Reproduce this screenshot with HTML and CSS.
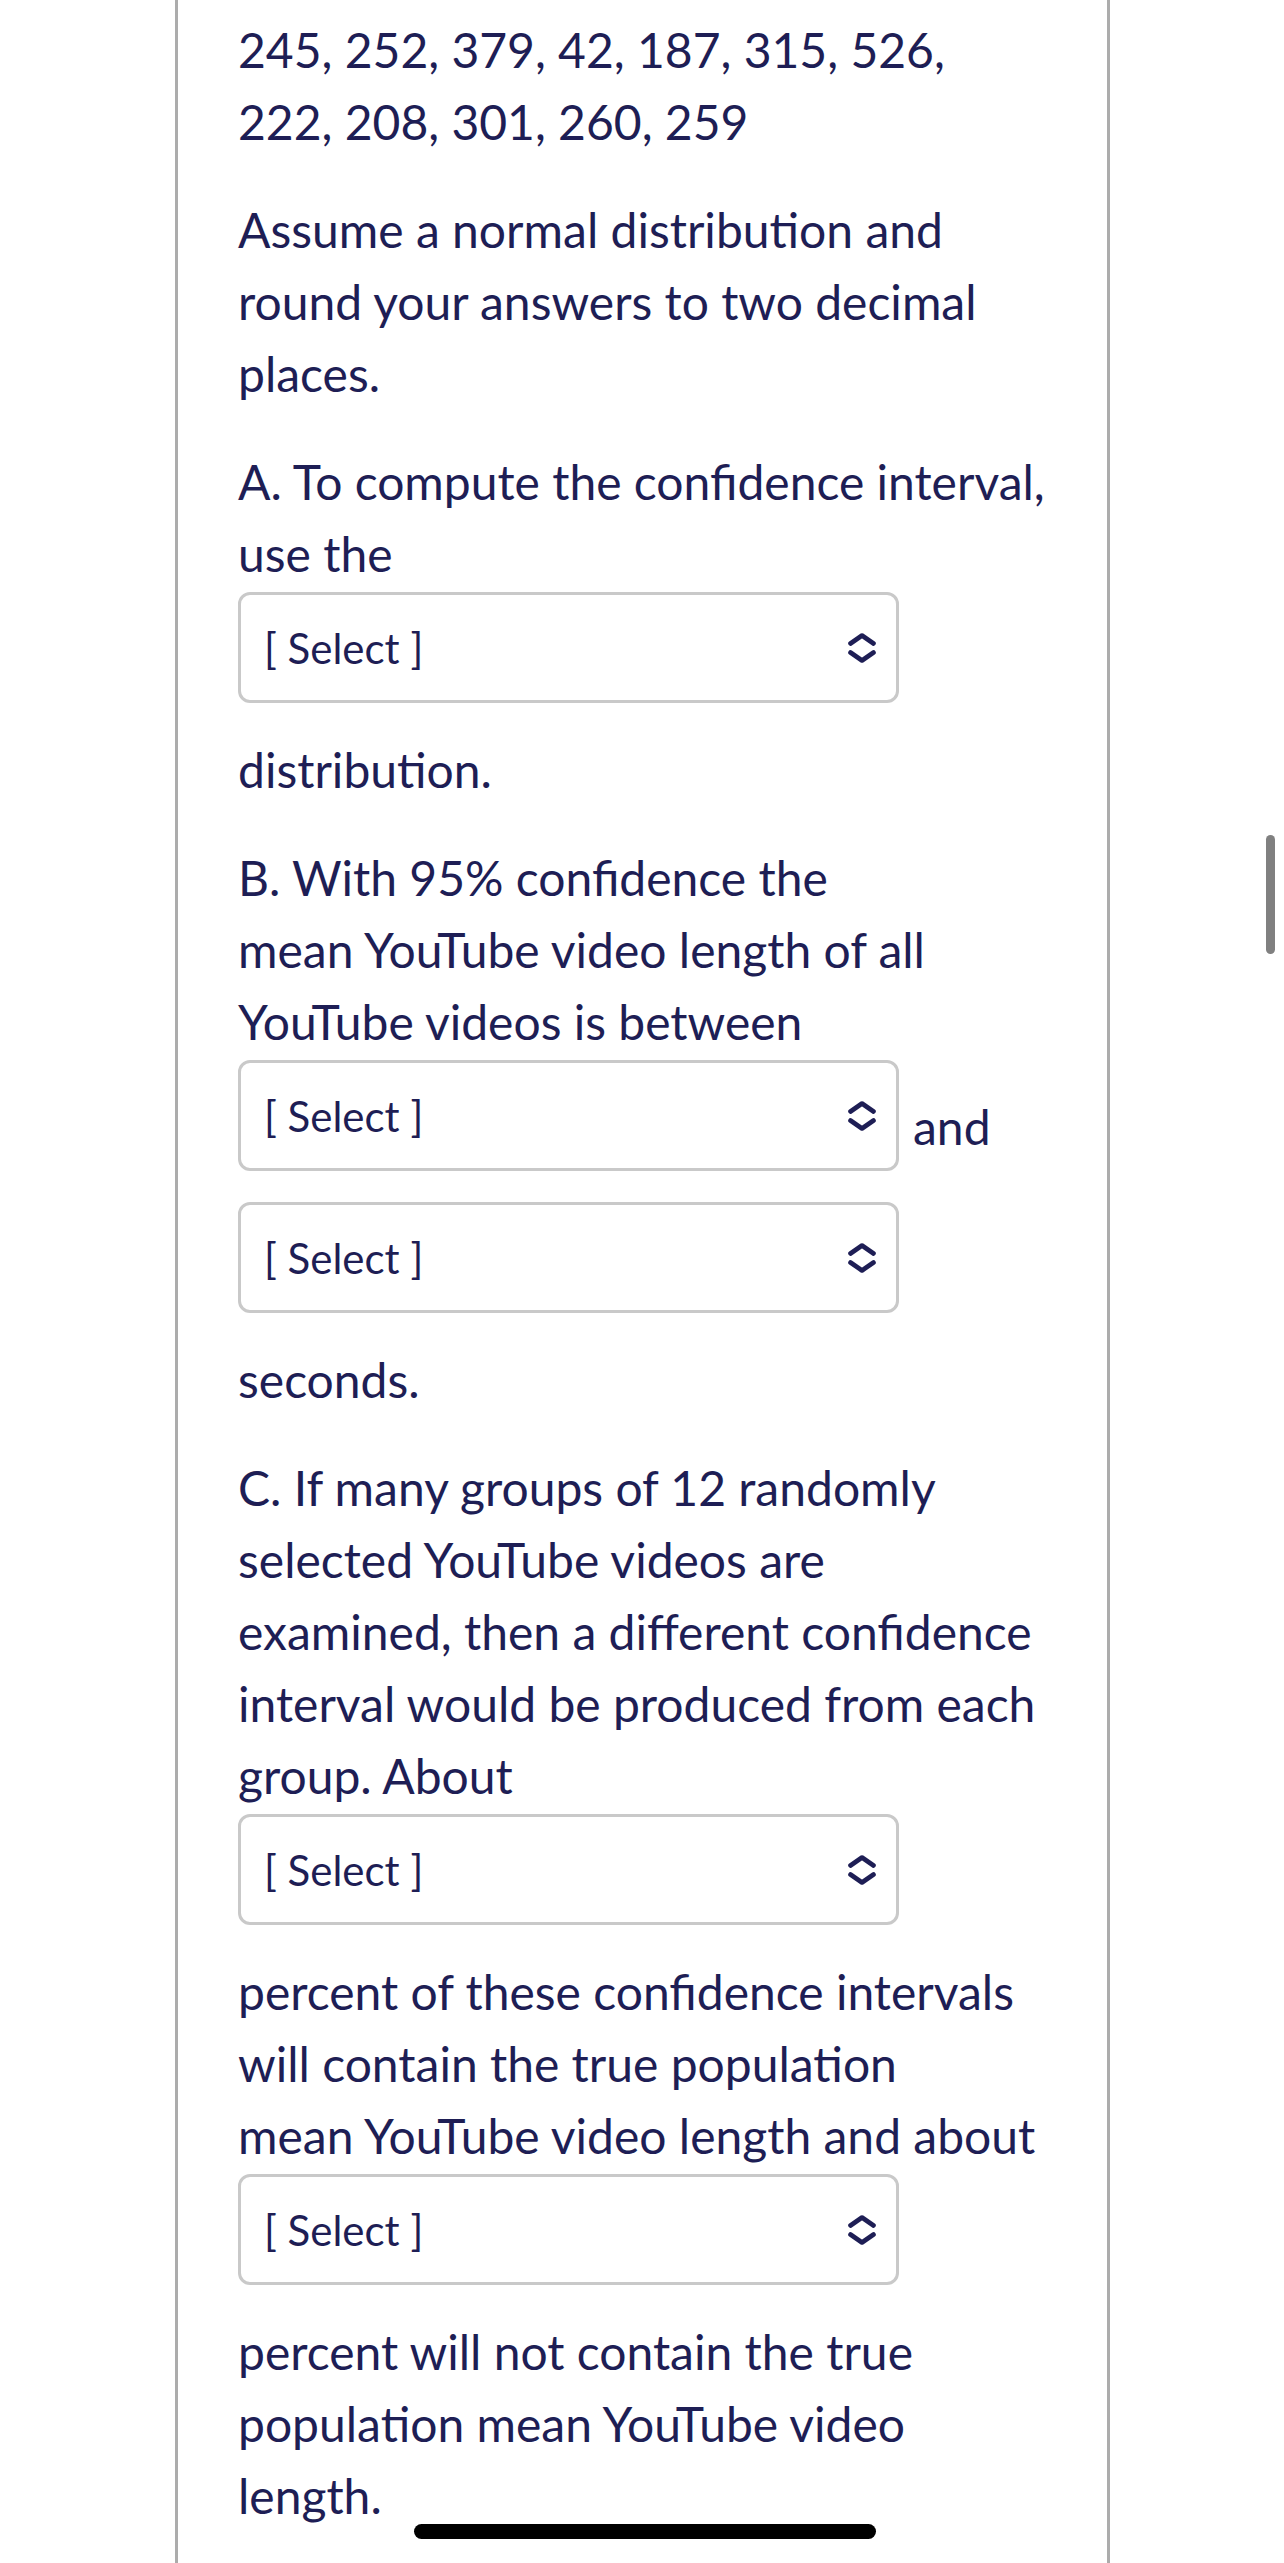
FILE: index.html
```html
<!DOCTYPE html>
<html lang="en">
<head>
<meta charset="utf-8">
<title>Quiz question</title>
<link rel="stylesheet" href="styles.css">
</head>
<body>
<div class="page">
  <div class="question">
    <div class="blk">
      <p class="txt">245, 252, 379, 42, 187, 315, 526,<br>222, 208, 301, 260, 259</p>
    </div>
    <div class="blk">
      <p class="txt">Assume a normal distribution and<br>round your answers to two decimal<br>places.</p>
    </div>
    <div class="blk">
      <p class="txt">A. To compute the confidence interval,<br>use the</p>
      <div class="dd-row">
        <div class="dd"><span class="dd-text">[ Select ]</span>
          <svg class="dd-icon" viewBox="0 0 28 30" width="28" height="30"><path d="M2.5 10.5 L14 2.5 L25.5 10.5 M2.5 19.5 L14 27.5 L25.5 19.5" fill="none" stroke="#1e1e55" stroke-width="4.6" stroke-linecap="round" stroke-linejoin="round"/></svg>
        </div>
      </div>
      <p class="txt">distribution.</p>
    </div>
    <div class="blk">
      <p class="txt">B. With 95% confidence the<br>mean YouTube video length of all<br>YouTube videos is between</p>
      <div class="dd-row">
        <div class="dd"><span class="dd-text">[ Select ]</span>
          <svg class="dd-icon" viewBox="0 0 28 30" width="28" height="30"><path d="M2.5 10.5 L14 2.5 L25.5 10.5 M2.5 19.5 L14 27.5 L25.5 19.5" fill="none" stroke="#1e1e55" stroke-width="4.6" stroke-linecap="round" stroke-linejoin="round"/></svg>
        </div>
        <span class="after">and</span>
      </div>
      <div class="dd-row">
        <div class="dd"><span class="dd-text">[ Select ]</span>
          <svg class="dd-icon" viewBox="0 0 28 30" width="28" height="30"><path d="M2.5 10.5 L14 2.5 L25.5 10.5 M2.5 19.5 L14 27.5 L25.5 19.5" fill="none" stroke="#1e1e55" stroke-width="4.6" stroke-linecap="round" stroke-linejoin="round"/></svg>
        </div>
      </div>
      <p class="txt">seconds.</p>
    </div>
    <div class="blk">
      <p class="txt">C. If many groups of 12 randomly<br>selected YouTube videos are<br>examined, then a different confidence<br>interval would be produced from each<br>group. About</p>
      <div class="dd-row">
        <div class="dd"><span class="dd-text">[ Select ]</span>
          <svg class="dd-icon" viewBox="0 0 28 30" width="28" height="30"><path d="M2.5 10.5 L14 2.5 L25.5 10.5 M2.5 19.5 L14 27.5 L25.5 19.5" fill="none" stroke="#1e1e55" stroke-width="4.6" stroke-linecap="round" stroke-linejoin="round"/></svg>
        </div>
      </div>
      <p class="txt">percent of these confidence intervals<br>will contain the true population<br>mean YouTube video length and about</p>
      <div class="dd-row">
        <div class="dd"><span class="dd-text">[ Select ]</span>
          <svg class="dd-icon" viewBox="0 0 28 30" width="28" height="30"><path d="M2.5 10.5 L14 2.5 L25.5 10.5 M2.5 19.5 L14 27.5 L25.5 19.5" fill="none" stroke="#1e1e55" stroke-width="4.6" stroke-linecap="round" stroke-linejoin="round"/></svg>
        </div>
      </div>
      <p class="txt">percent will not contain the true<br>population mean YouTube video<br>length.</p>
    </div>
  </div>
  <div class="scrollbar"></div>
  <div class="home-indicator"></div>
</div>
</body>
</html>
```

FILE: styles.css
```css
html, body {
  margin: 0;
  padding: 0;
  background: #ffffff;
}

body {
  font-family: Lato, "Open Sans", "Liberation Sans", sans-serif;
  color: #1e1e55;
  font-size: 48px;
  line-height: 72px;
}

.page {
  position: relative;
  min-height: 2563px;
  overflow: hidden;
}

.question {
  margin-left: 175px;
  width: 935px;
  min-height: 2563px;
  box-sizing: border-box;
  border-left: 3px solid #acacac;
  border-right: 3px solid #acacac;
  padding: 14px 60px 0 60px;
}

.blk {
  margin-bottom: 36px;
}

.txt {
  margin: 0;
  white-space: nowrap;
}

.dd-row {
  display: flex;
  align-items: flex-start;
  margin: 2px 0 31px 0;
}

.dd {
  width: 661px;
  height: 111px;
  box-sizing: border-box;
  border: 3px solid #c9c9c9;
  border-radius: 12px;
  padding: 0 20px 0 23px;
  display: flex;
  align-items: center;
  justify-content: space-between;
  background: #ffffff;
}

.dd-text {
  font-size: 42px;
  line-height: 50px;
}

.dd-icon {
  display: block;
  flex: none;
}

.after {
  margin-left: 14px;
  margin-top: 31px;
}

.scrollbar {
  position: absolute;
  left: 1266px;
  top: 835px;
  width: 9px;
  height: 119px;
  border-radius: 5px;
  background: #808080;
}

.home-indicator {
  position: absolute;
  left: 414px;
  top: 2524px;
  width: 462px;
  height: 15px;
  border-radius: 8px;
  background: #000000;
}
```
